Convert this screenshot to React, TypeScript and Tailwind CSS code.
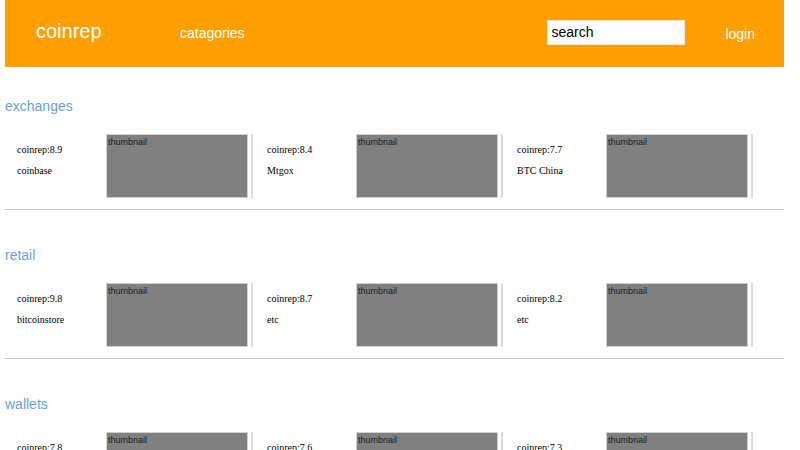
const sections = [
  {
    title: "exchanges",
    items: [
      { score: "8.9", name: "coinbase" },
      { score: "8.4", name: "Mtgox" },
      { score: "7.7", name: "BTC China" },
    ],
  },
  {
    title: "retail",
    items: [
      { score: "9.8", name: "bitcoinstore" },
      { score: "8.7", name: "etc" },
      { score: "8.2", name: "etc" },
    ],
  },
  {
    title: "wallets",
    items: [
      { score: "7.8", name: "etc" },
      { score: "7.6", name: "etc" },
      { score: "7.3", name: "etc" },
    ],
  },
];

function Item({ score, name }: { score: string; name: string }) {
  return (
    <div className="flex w-[250px] shrink-0">
      <div className="w-[101px] shrink-0 pl-[12px] pt-[10px] font-['Liberation_Serif',serif] text-[10px] leading-[12px] text-black">
        <div>coinrep:{score}</div>
        <div className="mt-[9px]">{name}</div>
      </div>
      <div className="h-[64px] w-[142px] shrink-0 border border-[#d0d0d0] bg-[#808080] px-[1px] font-['Liberation_Sans',sans-serif] text-[9px] leading-[14px] text-[#1a1a1a]">
        thumbnail
      </div>
      <div className="ml-[3px] h-[64px] w-[2px] bg-[#dcdcdc]" />
    </div>
  );
}

export default function App() {
  return (
    <div className="h-[450px] w-[800px] overflow-hidden bg-white font-['Liberation_Sans',sans-serif]">
      {/* header */}
      <div className="mx-[5px] flex h-[67px] w-[779px] items-center bg-[#ff9f00] text-white">
        <div className="ml-[31px] w-[144px] pb-[5px] text-[20px] leading-[24px]">coinrep</div>
        <div className="pb-[1px] text-[14px] leading-[16px]">catagories</div>
        <div className="ml-auto flex items-center">
          <div className="mb-[3px] flex h-[25px] w-[138px] items-center border border-[#e6e6e6] bg-white pl-[3px] text-[14px] text-black">
            search
          </div>
          <div className="ml-[40px] mr-[29px] text-[14px] leading-[16px]">login</div>
        </div>
      </div>

      {sections.map((s, i) => (
        <div key={s.title} className="ml-[5px] w-[779px]">
          <div className={(i === 0 ? "mt-[31px]" : "mt-[37px]") + " h-[16px] text-[14px] leading-[16px] text-[#6a9fdb]"}>
            {s.title}
          </div>
          <div className="mt-[20px] flex">
            {s.items.map((it, j) => (
              <Item key={j} score={it.score} name={it.name} />
            ))}
          </div>
          <div className="mt-[11px] h-[1px] bg-[#c8c8c8]" />
        </div>
      ))}
    </div>
  );
}
